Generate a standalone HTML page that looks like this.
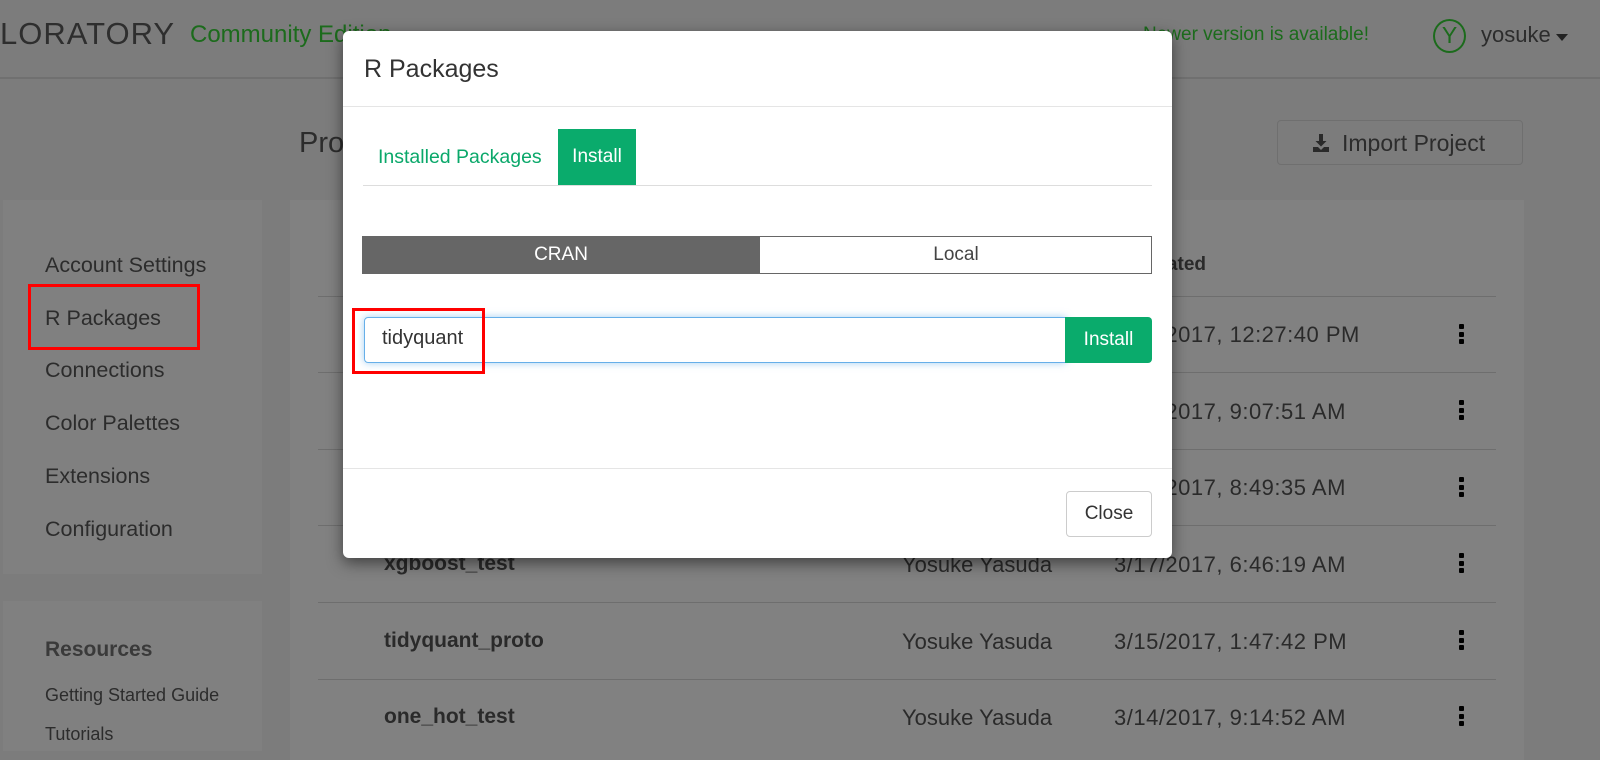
<!DOCTYPE html>
<html style="background:#7c7c7c"><head><meta charset="utf-8"><style>
*{box-sizing:border-box;margin:0;padding:0}
body{width:1600px;height:745px;overflow:hidden;background:#7c7c7c;font-family:"Liberation Sans",Arial,sans-serif;color:#2a2a2a;position:relative}
.a{position:absolute;white-space:nowrap}
.side{font-size:21.5px;color:#2c2c2c}
.row{position:absolute;left:318px;width:1178px;height:1px;background:#6e6e6e}
.nm{font-size:21px;font-weight:bold;left:384px}
.ow{font-size:22px;left:902px}
.dt{font-size:22px;left:1114px;letter-spacing:.5px}
.dots{position:absolute;left:1459px;width:6px}
.dots i{display:block;width:5px;height:5px;background:#000;margin-bottom:2.5px;border-radius:1px}
</style></head><body>
<div class="a" style="left:0;top:0;width:1600px;height:745px;background:#7c7c7c"></div>
<div class="a" style="left:0;top:16px;font-size:31px;color:#2e2e2e;letter-spacing:1px">LORATORY</div>
<div class="a" style="left:190px;top:21px;font-size:24px;color:#1c6b1c">Community Edition</div>
<div class="a" style="left:1143px;top:24px;font-size:19px;color:#1c6b1c">Newer version is available!</div>
<div class="a" style="left:1433px;top:19px;width:33px;height:34px;border:2.5px solid #1c6b1c;border-radius:50%;text-align:center;font-size:23px;line-height:29px;color:#1c6b1c">Y</div>
<div class="a" style="left:1481px;top:22px;font-size:22px;color:#2c2c2c">yosuke</div>
<div class="a" style="left:1556px;top:34px;width:0;height:0;border-left:6px solid transparent;border-right:6px solid transparent;border-top:7px solid #222"></div>
<div class="a" style="left:0;top:77px;width:1600px;height:1.5px;background:#707070"></div>
<div class="a" style="left:299px;top:127px;font-size:29px;color:#2c2c2c">Projects</div>
<div class="a" style="left:1277px;top:120px;width:246px;height:45px;border:1px solid #6f6f6f;border-radius:4px"></div>
<svg class="a" style="left:1312px;top:133px" width="18" height="20" viewBox="0 0 18 20"><path d="M7 1h4v7h3.5L9 13.5 3.5 8H7z" fill="#2a2a2a"/><path d="M1 14h5l3 3 3-3h5v5H1z" fill="#2a2a2a"/></svg>
<div class="a" style="left:1342px;top:130px;font-size:23px;color:#2c2c2c">Import Project</div>
<div class="a" style="left:3px;top:200px;width:259px;height:374px;background:#808080"></div>
<div class="a" style="left:3px;top:601px;width:259px;height:150px;background:#808080"></div>
<div class="a" style="left:290px;top:200px;width:1234px;height:560px;background:#818181"></div>
<div class="a side" style="left:45px;top:253px">Account Settings</div>
<div class="a side" style="left:45px;top:306px">R Packages</div>
<div class="a side" style="left:45px;top:358px">Connections</div>
<div class="a side" style="left:45px;top:411px">Color Palettes</div>
<div class="a side" style="left:45px;top:464px">Extensions</div>
<div class="a side" style="left:45px;top:517px">Configuration</div>
<div class="a" style="left:28px;top:284px;width:172px;height:66px;border:3px solid #f00"></div>
<div class="a" style="left:45px;top:638px;font-size:21px;font-weight:bold;color:#3a3a3a">Resources</div>
<div class="a" style="left:45px;top:685px;font-size:18px;color:#2c2c2c">Getting Started Guide</div>
<div class="a" style="left:45px;top:724px;font-size:18px;color:#2c2c2c">Tutorials</div>
<div class="a" style="left:1130px;top:254px;font-size:19px;font-weight:bold">Updated</div>
<div class="row" style="top:296px"></div><div class="row" style="top:372px"></div><div class="row" style="top:449px"></div><div class="row" style="top:525px"></div><div class="row" style="top:602px"></div><div class="row" style="top:679px"></div>
<div class="a dt" style="top:322px">3/17/2017, 12:27:40 PM</div>
<div class="a dt" style="top:399px">3/17/2017, 9:07:51 AM</div>
<div class="a dt" style="top:475px">3/17/2017, 8:49:35 AM</div>
<div class="a nm" style="top:552px">xgboost_test</div><div class="a ow" style="top:552px">Yosuke Yasuda</div><div class="a dt" style="top:552px">3/17/2017, 6:46:19 AM</div>
<div class="a nm" style="top:629px">tidyquant_proto</div><div class="a ow" style="top:629px">Yosuke Yasuda</div><div class="a dt" style="top:629px">3/15/2017, 1:47:42 PM</div>
<div class="a nm" style="top:705px">one_hot_test</div><div class="a ow" style="top:705px">Yosuke Yasuda</div><div class="a dt" style="top:705px">3/14/2017, 9:14:52 AM</div>
<div class="dots" style="top:324px"><i></i><i></i><i></i></div>
<div class="dots" style="top:400px"><i></i><i></i><i></i></div>
<div class="dots" style="top:477px"><i></i><i></i><i></i></div>
<div class="dots" style="top:553px"><i></i><i></i><i></i></div>
<div class="dots" style="top:630px"><i></i><i></i><i></i></div>
<div class="dots" style="top:706px"><i></i><i></i><i></i></div>

<div class="a" style="left:343px;top:31px;width:829px;height:527px;background:#fff;border-radius:6px;box-shadow:0 5px 15px rgba(0,0,0,.5)">
 <div class="a" style="left:21px;top:24px;font-size:25px;color:#333">R Packages</div>
 <div class="a" style="left:0;top:75px;width:829px;height:1px;background:#e5e5e5"></div>
 <div class="a" style="left:35px;top:115px;font-size:19.5px;color:#0aa86a">Installed Packages</div>
 <div class="a" style="left:215px;top:98px;width:78px;height:56px;background:#0aab6c;color:#fff;font-size:19px;text-align:center;line-height:56px">Install</div>
 <div class="a" style="left:20px;top:154px;width:789px;height:1px;background:#ddd"></div>
 <div class="a" style="left:19px;top:205px;width:790px;height:38px;border:1.5px solid #666;background:#fff"></div>
 <div class="a" style="left:19px;top:205px;width:398px;height:38px;background:#666;color:#fff;font-size:19px;text-align:center;line-height:38px">CRAN</div>
 <div class="a" style="left:417px;top:205px;width:392px;height:38px;color:#444;font-size:19px;text-align:center;line-height:38px">Local</div>
 <div class="a" style="left:21px;top:286px;width:702px;height:46px;border:1.5px solid #66afe9;border-radius:4px 0 0 4px;box-shadow:0 0 8px rgba(102,175,233,.6)"></div>
 <div class="a" style="left:39px;top:296px;font-size:20px;color:#333">tidyquant</div>
 <div class="a" style="left:722px;top:286px;width:87px;height:46px;background:#0aab6c;border-radius:0 4px 4px 0;color:#fff;font-size:19px;text-align:center;line-height:46px">Install</div>
 <div class="a" style="left:9px;top:277px;width:133px;height:66px;border:3px solid #f00"></div>
 <div class="a" style="left:0;top:437px;width:829px;height:1px;background:#e5e5e5"></div>
 <div class="a" style="left:723px;top:460px;width:86px;height:46px;border:1px solid #ccc;border-radius:4px;color:#333;font-size:19px;text-align:center;line-height:44px">Close</div>
</div>
</body></html>
